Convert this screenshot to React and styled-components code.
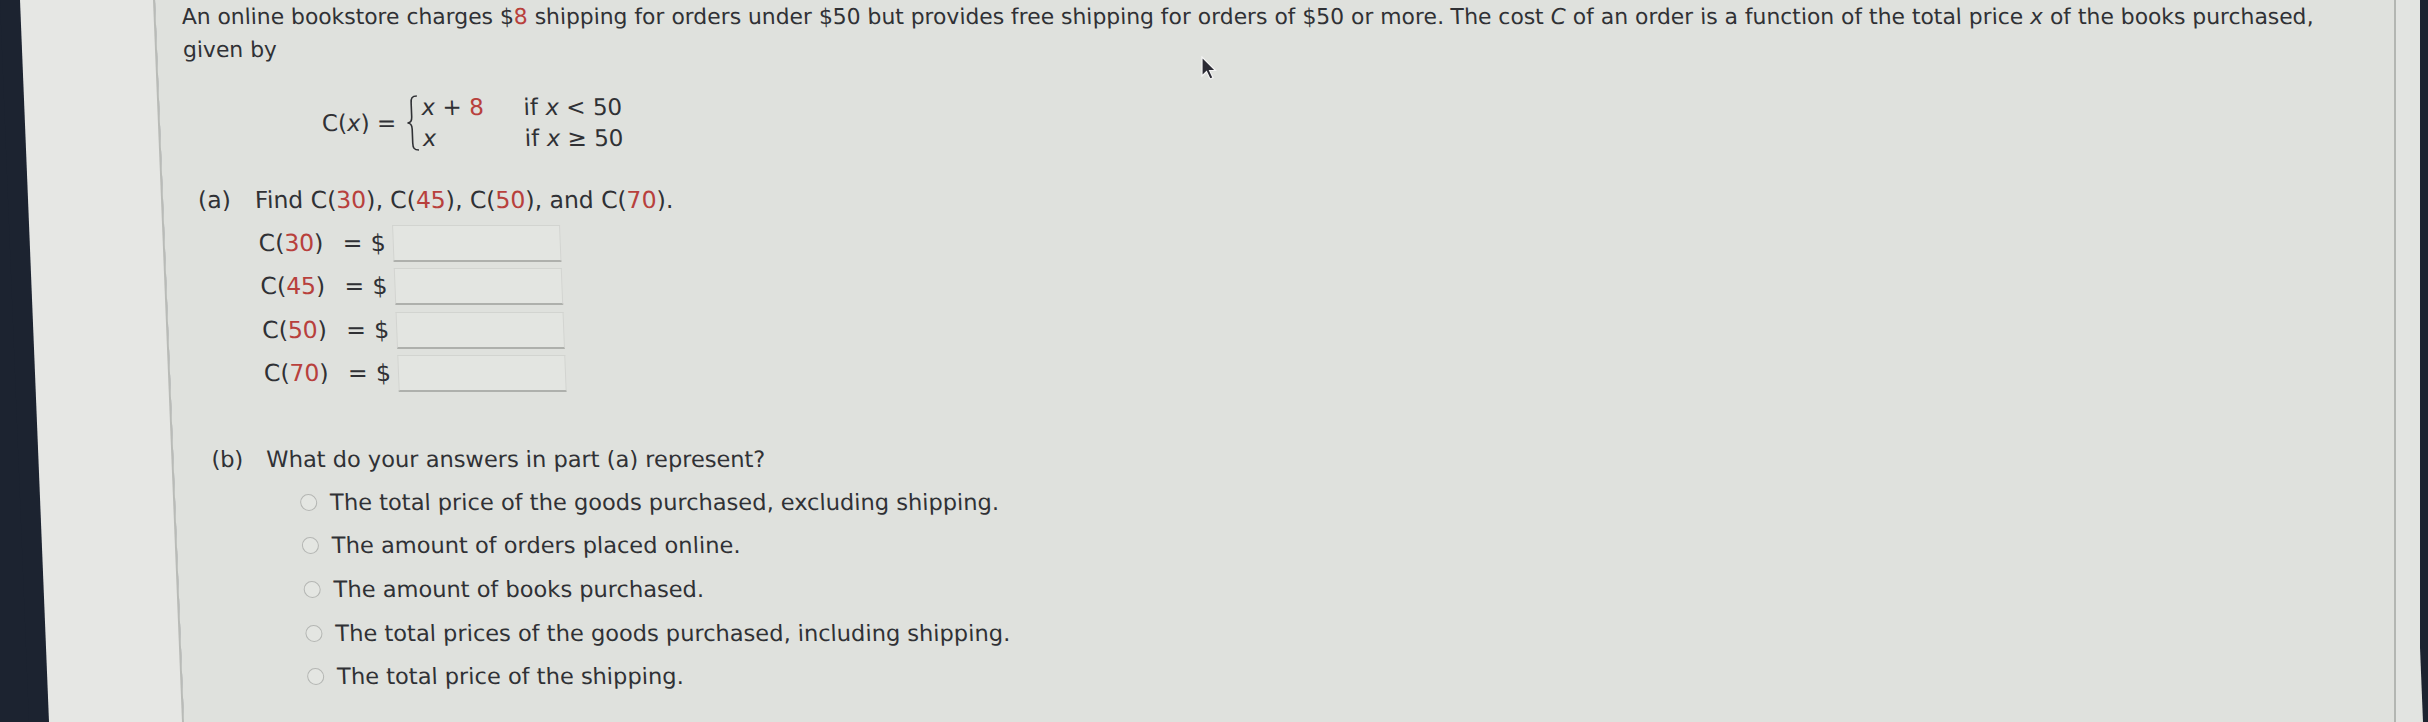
import React from "react";
import styled, { createGlobalStyle } from "styled-components";

const GlobalStyle = createGlobalStyle`
  html, body { margin: 0; padding: 0; width: 2428px; height: 722px; overflow: hidden; background: #1c2330; }
  #root { width: 100%; height: 100%; }
`;

const Screen = styled.div`
  position: relative;
  display: flex;
  width: 2428px;
  height: 722px;
  overflow: hidden;
  background: #1c2330;
  font-family: "DejaVu Sans", Verdana, sans-serif;
  color: #303135;
`;

const Tilted = styled.div`
  flex: 1;
  display: flex;
  min-width: 0;
  transform: skewX(2.3deg);
  transform-origin: top left;
`;

const Bezel = styled.div`
  flex: none;
  width: ${(p) => p.$w}px;
  background: #1c2330;
`;

const Gutter = styled.div`
  flex: none;
  width: 133px;
  background: #e6e7e4;
  border-right: 2px solid #b9bbb7;
`;

const Main = styled.main`
  flex: 1;
  min-width: 0;
  background: #dfe1dd;
  padding: 0 0 0 26px;
`;

const RightRail = styled.div`
  position: relative;
  flex: none;
  width: 24px;
  background: #e2e4e1;
  border-left: 2px solid #b3b6b2;
`;

const Para = styled.p`
  margin: 0;
  font-size: 21.85px;
  line-height: 33px;
  white-space: nowrap;
`;

const Red = styled.span`
  color: #b8403c;
`;

const Var = styled.i`
  font-style: italic;
`;

const Formula = styled.div`
  display: flex;
  align-items: center;
  margin: 27px 0 0 136px;
  font-size: 23px;
`;

const Lhs = styled.span`
  margin-right: 10px;
`;

const Brace = styled.svg`
  flex: none;
  width: 14px;
  height: 58px;
  margin-right: 2px;
`;

const Cases = styled.div`
  display: grid;
  grid-template-columns: 102px auto;
  row-gap: 2px;
  line-height: 29px;
`;

const Part = styled.section`
  display: flex;
  margin: ${(p) => p.$top}px 0 0 ${(p) => p.$indent}px;
  font-size: ${(p) => p.$size}px;
  line-height: 33px;
  white-space: nowrap;
`;

const PartLabel = styled.span`
  flex: none;
  width: ${(p) => p.$w}px;
`;

const PartBody = styled.div`
  display: flex;
  flex-direction: column;
`;

const AnswerList = styled.div`
  display: flex;
  flex-direction: column;
  gap: 7.5px;
  margin-top: 8px;
  margin-left: 2px;
`;

const AnswerRow = styled.div`
  display: flex;
  align-items: center;
  height: 36px;
`;

const FnLabel = styled.span`
  width: 84px;
`;

const Eq = styled.span`
  width: 28px;
`;

const Dollar = styled.span`
  width: 22px;
`;

const AnswerBox = styled.div`
  width: 166px;
  height: 34px;
  background: #e3e5e1;
  border: 1px solid #d2d4d0;
  border-bottom: 2px solid #aeb0ac;
  box-sizing: content-box;
`;

const Options = styled.div`
  display: flex;
  flex-direction: column;
  gap: 10.7px;
  margin: 10px 0 0 32px;
`;

const Option = styled.label`
  display: flex;
  align-items: center;
  height: 33px;
`;

const Radio = styled.span`
  flex: none;
  width: 15px;
  height: 15px;
  border: 1.5px solid #b4b6b3;
  border-radius: 50%;
  background: #e4e6e2;
  margin-right: 13px;
`;

const Cursor = styled.svg`
  position: absolute;
  left: 1200px;
  top: 56px;
  width: 18px;
  height: 26px;
`;

export default function App() {
  const rows = ["30", "45", "50", "70"];
  const opts = [
    "The total price of the goods purchased, excluding shipping.",
    "The amount of orders placed online.",
    "The amount of books purchased.",
    "The total prices of the goods purchased, including shipping.",
    "The total price of the shipping.",
  ];
  return (
    <>
      <GlobalStyle />
      <Screen>
        <Tilted>
          <Bezel $w={20} />
          <Gutter />
          <Main>
            <Para>
              An online bookstore charges $<Red>8</Red> shipping for orders under $50 but provides free
              shipping for orders of $50 or more. The cost <Var>C</Var> of an order is a function of the
              total price <Var>x</Var> of the books purchased,
              <br />
              given by
            </Para>
            <Formula>
              <Lhs>
                C(<Var>x</Var>) =
              </Lhs>
              <Brace viewBox="0 0 14 58">
                <path
                  d="M12 2 C7 2 6 4 6 9 L6 23 C6 27 5 29 1.5 29 C5 29 6 31 6 35 L6 49 C6 54 7 56 12 56"
                  fill="none"
                  stroke="#303135"
                  strokeWidth="1.6"
                />
              </Brace>
              <Cases>
                <span>
                  <Var>x</Var> + <Red>8</Red>
                </span>
                <span>
                  if <Var>x</Var> &lt; 50
                </span>
                <span>
                  <Var>x</Var>
                </span>
                <span>
                  if <Var>x</Var> ≥ 50
                </span>
              </Cases>
            </Formula>
            <Part $top={31} $indent={9} $size={23.5}>
              <PartLabel $w={57}>(a)</PartLabel>
              <PartBody>
                <span>
                  Find C(<Red>30</Red>), C(<Red>45</Red>), C(<Red>50</Red>), and C(<Red>70</Red>).
                </span>
                <AnswerList>
                  {rows.map((r) => (
                    <AnswerRow key={r}>
                      <FnLabel>
                        C(<Red>{r}</Red>)
                      </FnLabel>
                      <Eq>=</Eq>
                      <Dollar>$</Dollar>
                      <AnswerBox />
                    </AnswerRow>
                  ))}
                </AnswerList>
              </PartBody>
            </Part>
            <Part $top={51} $indent={12} $size={22.5}>
              <PartLabel $w={55}>(b)</PartLabel>
              <PartBody>
                <span>What do your answers in part (a) represent?</span>
                <Options>
                  {opts.map((o) => (
                    <Option key={o}>
                      <Radio />
                      {o}
                    </Option>
                  ))}
                </Options>
              </PartBody>
            </Part>
          </Main>
        </Tilted>
        <RightRail />
        <Bezel $w={8} />
        <Cursor viewBox="0 0 18 26">
          <path d="M2 1 L2 20 L6.5 15.5 L10 23 L13 21.8 L9.6 14.5 L15.5 14.5 Z" fill="#2a2a33" stroke="#f4f4f4" strokeWidth="1.2" />
        </Cursor>
      </Screen>
    </>
  );
}
